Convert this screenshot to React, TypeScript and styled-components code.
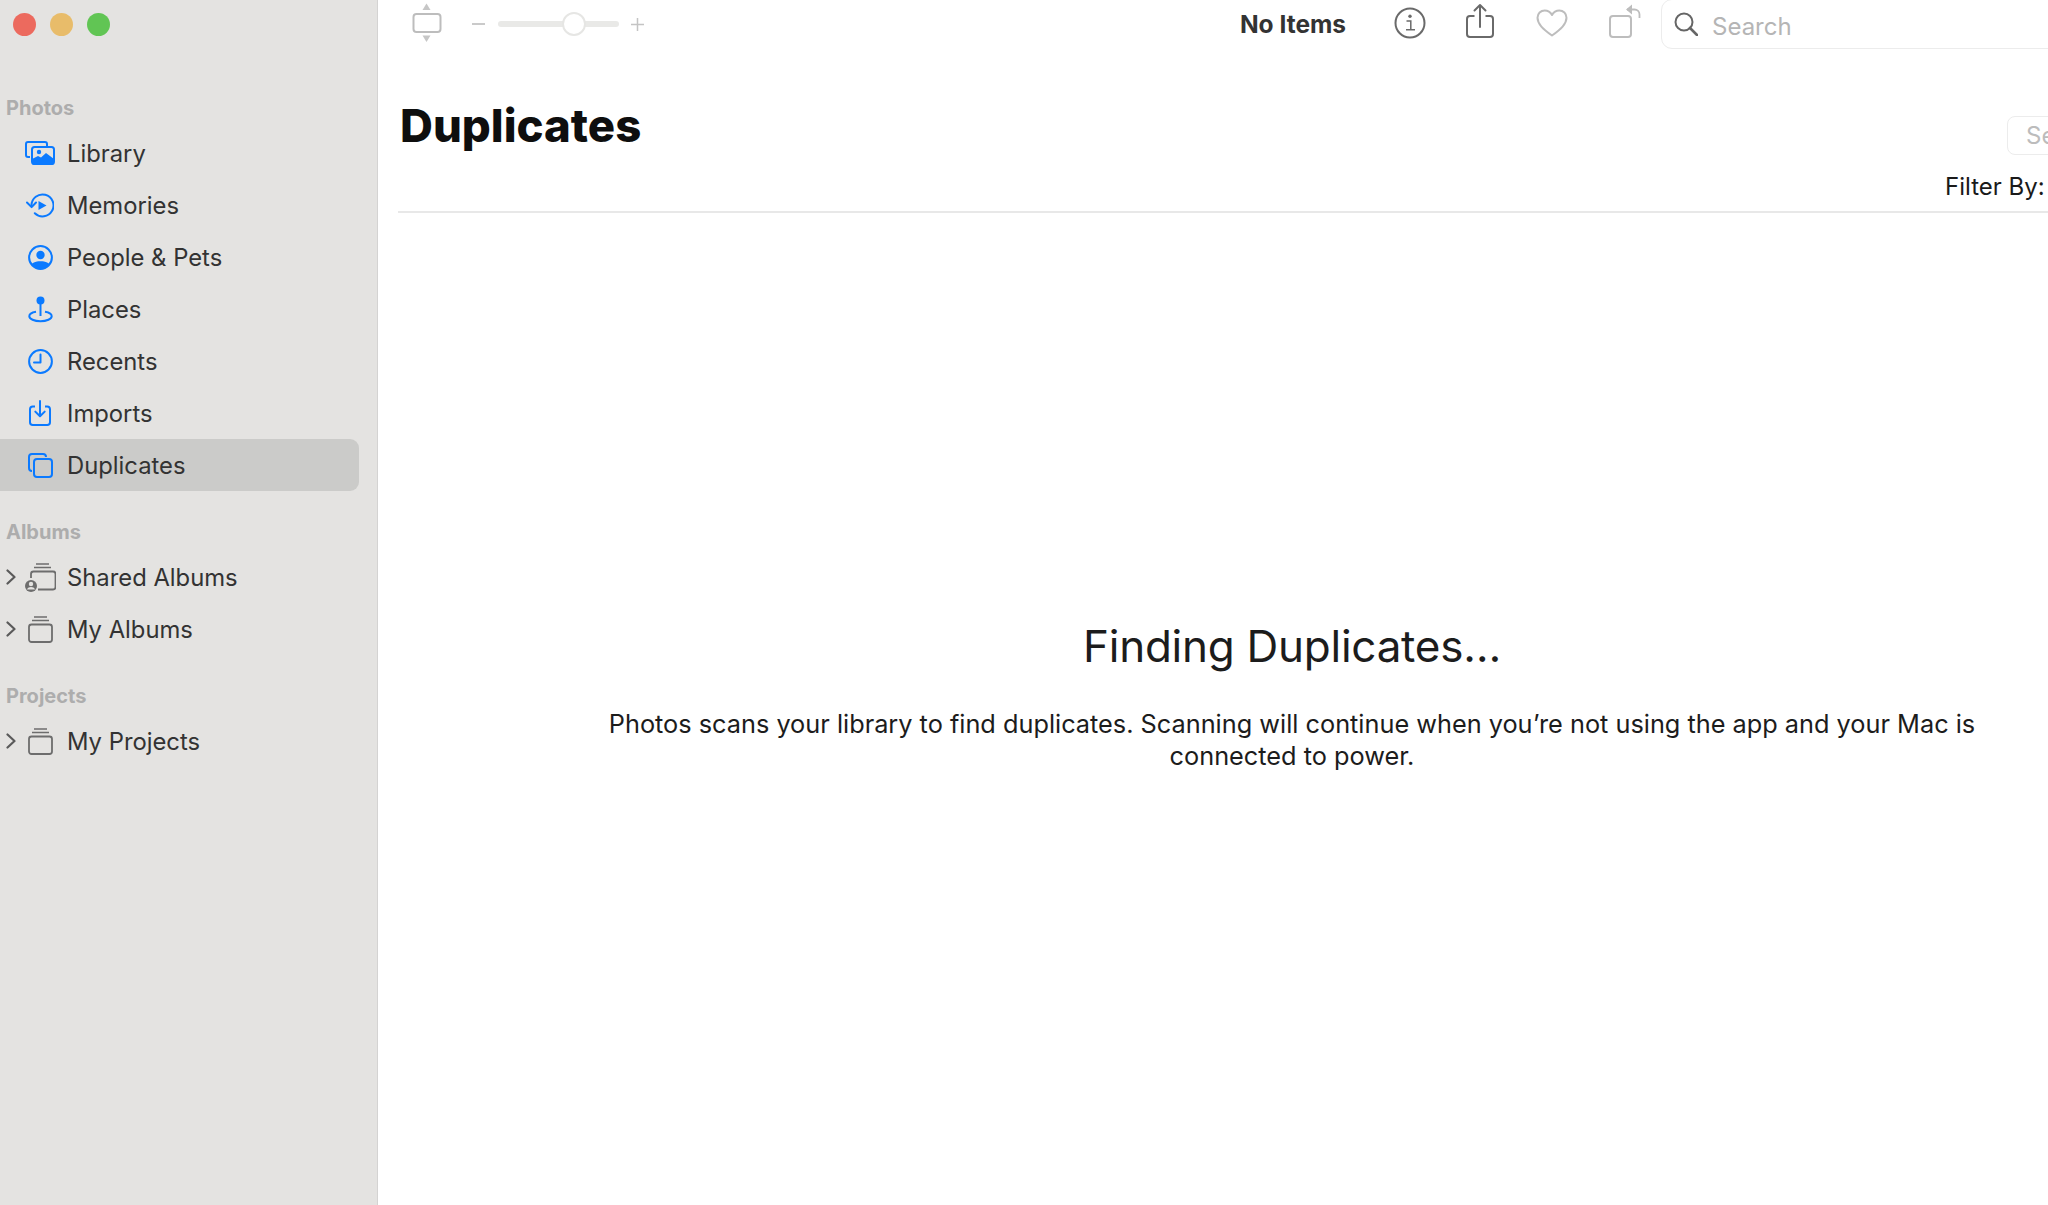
import React from "react";
import styled, { createGlobalStyle } from "styled-components";

const Global = createGlobalStyle`
  html, body { margin: 0; padding: 0; background: #fff; overflow: hidden; }
  body { font-family: Inter, "Liberation Sans", sans-serif; }
`;

const Window = styled.div`
  display: flex;
  width: 2048px;
  height: 1205px;
  overflow: hidden;
`;

const Sidebar = styled.aside`
  flex: 0 0 378px;
  box-sizing: border-box;
  background: #e4e3e1;
  border-right: 1px solid #d4d3d2;
  padding-right: 18px;
`;

const Lights = styled.div`
  display: flex;
  gap: 14px;
  padding: 13px 0 0 13px;
  height: 36px;
  box-sizing: content-box;
`;

const Light = styled.span<{ $color: string }>`
  width: 23px;
  height: 23px;
  border-radius: 50%;
  background: ${(p) => p.$color};
`;

const SectionLabel = styled.div<{ $top: number }>`
  margin-top: ${(p) => p.$top}px;
  margin-bottom: 6px;
  padding-left: 6px;
  height: 26px;
  line-height: 26px;
  font-size: 20px;
  font-weight: 700;
  color: #adadad;
`;

const Row = styled.div<{ $selected?: boolean }>`
  display: flex;
  align-items: center;
  height: 52px;
  border-radius: 0 9px 9px 0;
  background: ${(p) => (p.$selected ? "#cbcbc9" : "transparent")};
`;

const ChevronSlot = styled.span`
  flex: 0 0 24px;
  display: flex;
  align-items: center;
  padding-left: 6px;
  box-sizing: border-box;
`;

const IconSlot = styled.span`
  flex: 0 0 32px;
  height: 34px;
  display: flex;
  align-items: center;
  justify-content: center;
`;

const RowLabel = styled.span`
  margin-left: 11px;
  font-size: 23.8px;
  color: #333333;
`;

const Main = styled.main`
  flex: 1;
  min-width: 0;
  overflow: hidden;
`;

const Toolbar = styled.div`
  display: flex;
  align-items: center;
  height: 48px;
  padding-left: 34px;
  width: 2000px;
`;

const ToolSlot = styled.span<{ $left: number; $lift?: number }>`
  margin-left: ${(p) => p.$left}px;
  margin-bottom: ${(p) => p.$lift ?? 0}px;
  display: flex;
  align-items: center;
  flex-shrink: 0;
`;

const ZoomSlider = styled.div`
  position: relative;
  margin-left: 13px;
  width: 121px;
  height: 6px;
  border-radius: 3px;
  background: #e9e9e7;
  flex-shrink: 0;
`;

const SliderThumb = styled.span`
  position: absolute;
  left: 64px;
  top: -9px;
  width: 20px;
  height: 20px;
  border-radius: 50%;
  background: #fff;
  border: 2px solid #e6e6e4;
`;

const ItemCount = styled.span`
  margin-left: 594px;
  width: 110px;
  text-align: center;
  font-size: 24.5px;
  line-height: 50px;
  font-weight: 700;
  color: #333;
  flex-shrink: 0;
`;

const SearchField = styled.div`
  margin-left: 20px;
  flex: 0 0 440px;
  height: 50px;
  box-sizing: border-box;
  margin-top: -1px;
  display: flex;
  align-items: center;
  gap: 14px;
  padding-left: 12px;
  border: 1px solid #ececec;
  border-radius: 11px;
  font-size: 24px;
  color: #b5b5b5;
`;

const SearchText = styled.span`
  position: relative;
  top: 3px;
`;

const Header = styled.header`
  display: flex;
  width: 1800px;
  margin-left: 20px;
  height: 165px;
  box-sizing: border-box;
  border-bottom: 2px solid #e8e8e8;
`;

const TitleBlock = styled.div`
  flex: 0 0 1547px;
`;

const Title = styled.h1`
  margin: 50px 0 0 2px;
  font-size: 45.5px;
  line-height: 56px;
  font-weight: 800;
  color: #0e0e0e;
`;

const Actions = styled.div`
  display: flex;
  flex-direction: column;
  align-items: flex-start;
`;

const SelectButton = styled.div`
  margin: 68px 0 0 62px;
  width: 110px;
  height: 39px;
  box-sizing: border-box;
  border: 1px solid #ececec;
  border-radius: 8px;
  padding-left: 18px;
  line-height: 37px;
  font-size: 24px;
  color: #bcbcbc;
`;

const FilterLabel = styled.div`
  margin-top: 18px;
  font-size: 24px;
  line-height: 28px;
  color: #1a1a1a;
  white-space: nowrap;
`;

const EmptyState = styled.section`
  width: 1788px;
  margin-left: 20px;
  display: flex;
  flex-direction: column;
  align-items: center;
  padding-top: 405px;
`;

const EmptyTitle = styled.h2`
  margin: 0;
  font-size: 44px;
  letter-spacing: -0.26px;
  line-height: 56px;
  font-weight: 400;
  color: #1c1c1c;
`;

const EmptyBody = styled.p`
  margin: 34px 0 0;
  max-width: 1400px;
  font-size: 25.3px;
  line-height: 32px;
  text-align: center;
  color: #1c1c1c;
`;

const BLUE = "#0b7aff";
const GREY = "#6d6d6d";

const Chevron = () => (
  <svg width="11" height="16" viewBox="0 0 11 16" fill="none">
    <path d="M1.5 1.5 8.5 8l-7 6.5" stroke="#5a5a5a" strokeWidth="2.2" strokeLinecap="round" strokeLinejoin="round" />
  </svg>
);

const LibraryIcon = () => (
  <svg width="30" height="24" viewBox="0 0 30 24" fill="none">
    <path d="M5 16H3a2 2 0 0 1-2-2V3a2 2 0 0 1 2-2h17a2 2 0 0 1 2 2v2" stroke={BLUE} strokeWidth="2" />
    <rect x="7" y="6" width="22" height="17" rx="2.5" stroke={BLUE} strokeWidth="2" />
    <circle cx="14" cy="11" r="2.2" fill={BLUE} />
    <path d="M7 18l6-3 3 1.500 5-4.500 8 6v3.500a2.500 2.500 0 0 1-2.500 2.500h-17A2.500 2.500 0 0 1 7 21.500z" fill={BLUE} />
  </svg>
);

const MemoriesIcon = () => (
  <svg width="28" height="25" viewBox="0 0 28 25" fill="none">
    <path d="M5.500 12.500A11 11 0 1 1 8.800 20.300" stroke={BLUE} strokeWidth="2" strokeLinecap="round" />
    <path d="M1 9.500l4.600 4.600 4.400-4.600" stroke={BLUE} strokeWidth="2" strokeLinecap="round" strokeLinejoin="round" />
    <path d="M12.500 8v9l8-4.500z" fill={BLUE} />
  </svg>
);

const PeopleIcon = () => (
  <svg width="25" height="25" viewBox="0 0 25 25" fill="none">
    <defs>
      <clipPath id="peopleClip"><circle cx="12.500" cy="12.500" r="11.500" /></clipPath>
    </defs>
    <circle cx="12.500" cy="10" r="4.200" fill={BLUE} />
    <path d="M2 25v-4c1.500-3 5.400-4.700 10.500-4.700S21.500 18 23 21v4z" fill={BLUE} clipPath="url(#peopleClip)" />
    <circle cx="12.500" cy="12.500" r="11.400" stroke={BLUE} strokeWidth="2" />
  </svg>
);

const PlacesIcon = () => (
  <svg width="25" height="27" viewBox="0 0 25 27" fill="none">
    <circle cx="12.500" cy="4.500" r="4" fill={BLUE} />
    <path d="M12.500 7v13" stroke={BLUE} strokeWidth="2" />
    <path d="M8 15.800C4 16.500 1.300 18 1.300 20.300c0 2.700 5 4.900 11.200 4.900s11.200-2.200 11.200-4.900c0-2.300-2.700-3.800-6.700-4.500" stroke={BLUE} strokeWidth="2" />
  </svg>
);

const RecentsIcon = () => (
  <svg width="25" height="25" viewBox="0 0 25 25" fill="none">
    <circle cx="12.500" cy="12.500" r="11.400" stroke={BLUE} strokeWidth="2" />
    <path d="M12.500 5.500V13.500H6" stroke={BLUE} strokeWidth="2" strokeLinecap="round" strokeLinejoin="round" />
  </svg>
);

const ImportsIcon = () => (
  <svg width="22" height="26" viewBox="0 0 22 26" fill="none">
    <path d="M6 6.500H3.800a2.800 2.800 0 0 0-2.800 2.800v12.900a2.800 2.800 0 0 0 2.800 2.800h14.400a2.800 2.800 0 0 0 2.800-2.800V9.300a2.800 2.800 0 0 0-2.800-2.800H16" stroke={BLUE} strokeWidth="2" />
    <path d="M11 1v15M6.300 11.600l4.700 4.700 4.700-4.700" stroke={BLUE} strokeWidth="2" strokeLinecap="round" strokeLinejoin="round" />
  </svg>
);

const DuplicatesIcon = () => (
  <svg width="25" height="25" viewBox="0 0 25 25" fill="none">
    <path d="M4 18A3 3 0 0 1 1 15V4a3 3 0 0 1 3-3h11a3 3 0 0 1 3 3" stroke={BLUE} strokeWidth="2" />
    <rect x="6" y="6" width="18" height="18" rx="3" stroke={BLUE} strokeWidth="2" />
  </svg>
);

const StackIcon = () => (
  <svg width="25" height="27" viewBox="0 0 25 27" fill="none">
    <path d="M6 1h13M4 4.500h17" stroke={GREY} strokeWidth="1.500" />
    <rect x="1" y="8.500" width="23" height="17.500" rx="2.500" stroke={GREY} strokeWidth="1.800" />
  </svg>
);

const SharedStackIcon = () => (
  <svg width="31" height="29" viewBox="0 0 31 29" fill="none">
    <path d="M11 1h13M9 4.500h17" stroke={GREY} strokeWidth="1.500" />
    <path d="M6 15v-4a2.500 2.500 0 0 1 2.500-2.500h19.500a2.500 2.500 0 0 1 2.500 2.500v13a2.500 2.500 0 0 1-2.500 2.500H13" stroke={GREY} strokeWidth="1.800" />
    <circle cx="6" cy="23" r="6" fill={GREY} />
    <circle cx="6" cy="21" r="2.200" fill="#e4e3e1" />
    <path d="M2 26.500c.8-1.800 2.200-2.500 4-2.500s3.200.7 4 2.500z" fill="#e4e3e1" />
  </svg>
);

const ViewToggleIcon = () => (
  <svg width="30" height="48" viewBox="0 0 30 48" fill="none">
    <path d="M14.500 3.500l4 6.500h-8z" fill="#c6c6c6" />
    <rect x="1.500" y="14" width="27" height="18" rx="3" stroke="#bdbdbd" strokeWidth="2" />
    <path d="M14.500 42l4-6.500h-8z" fill="#c6c6c6" />
  </svg>
);

const MinusIcon = () => (
  <svg width="13" height="4" viewBox="0 0 13 4"><path d="M0 2h13" stroke="#c4c4c4" strokeWidth="1.800" /></svg>
);

const PlusIcon = () => (
  <svg width="13" height="13" viewBox="0 0 13 13"><path d="M0 6.500h13M6.500 0v13" stroke="#c4c4c4" strokeWidth="1.500" /></svg>
);

const InfoIcon = () => (
  <svg width="32" height="32" viewBox="0 0 32 32" fill="none">
    <circle cx="16" cy="16" r="14.500" stroke="#6a6a6a" strokeWidth="2" />
    <circle cx="16" cy="9.300" r="1.700" fill="#6a6a6a" />
    <path d="M12.500 14h4.300v8.500M12 22.800h9" stroke="#6a6a6a" strokeWidth="1.500" />
  </svg>
);

const ShareIcon = () => (
  <svg width="28" height="36" viewBox="0 0 28 36" fill="none">
    <path d="M8.500 13H4a3 3 0 0 0-3 3v15a3 3 0 0 0 3 3h20a3 3 0 0 0 3-3V16a3 3 0 0 0-3-3h-4.500" stroke="#6a6a6a" strokeWidth="2" />
    <path d="M14 24V2M8.500 7.500 14 2l5.500 5.500" stroke="#6a6a6a" strokeWidth="2" strokeLinecap="round" strokeLinejoin="round" />
  </svg>
);

const HeartIcon = () => (
  <svg width="32" height="28" viewBox="0 0 32 28" fill="none">
    <path d="M16 26.500C7 20 1.500 15 1.500 8.800 1.500 4.600 4.700 1.500 8.700 1.500c3 0 5.700 1.600 7.300 4.500 1.600-2.900 4.300-4.500 7.300-4.500 4 0 7.200 3.100 7.200 7.300C30.500 15 25 20 16 26.500z" stroke="#bdbdbd" strokeWidth="2" strokeLinejoin="round" />
  </svg>
);

const RotateIcon = () => (
  <svg width="32" height="34" viewBox="0 0 32 34" fill="none">
    <rect x="1" y="12" width="21" height="21" rx="3" stroke="#bdbdbd" strokeWidth="2" />
    <path d="M30.500 14v-3.500a5 5 0 0 0-5-5H18" stroke="#bdbdbd" strokeWidth="1.800" />
    <path d="M23 .5l-6 5 6 5z" fill="#bdbdbd" />
  </svg>
);

const SearchIcon = () => (
  <svg width="24" height="24" viewBox="0 0 24 24" fill="none">
    <circle cx="10" cy="10" r="8.500" stroke="#666" strokeWidth="2" />
    <path d="M16 16l7 7" stroke="#666" strokeWidth="2.600" strokeLinecap="round" />
  </svg>
);

type Item = { label: string; icon: React.ReactNode; selected?: boolean; chevron?: boolean };

const photos: Item[] = [
  { label: "Library", icon: <LibraryIcon /> },
  { label: "Memories", icon: <MemoriesIcon /> },
  { label: "People & Pets", icon: <PeopleIcon /> },
  { label: "Places", icon: <PlacesIcon /> },
  { label: "Recents", icon: <RecentsIcon /> },
  { label: "Imports", icon: <ImportsIcon /> },
  { label: "Duplicates", icon: <DuplicatesIcon />, selected: true },
];
const albums: Item[] = [
  { label: "Shared Albums", icon: <SharedStackIcon />, chevron: true },
  { label: "My Albums", icon: <StackIcon />, chevron: true },
];
const projects: Item[] = [{ label: "My Projects", icon: <StackIcon />, chevron: true }];

const Rows = ({ items }: { items: Item[] }) => (
  <>
    {items.map((it) => (
      <Row key={it.label} $selected={it.selected}>
        <ChevronSlot>{it.chevron && <Chevron />}</ChevronSlot>
        <IconSlot>{it.icon}</IconSlot>
        <RowLabel>{it.label}</RowLabel>
      </Row>
    ))}
  </>
);

export default function App() {
  return (
    <Window>
      <Global />
      <Sidebar>
        <Lights>
          <Light $color="#ec6a5e" />
          <Light $color="#e8bc6a" />
          <Light $color="#61c554" />
        </Lights>
        <SectionLabel $top={46}>Photos</SectionLabel>
        <Rows items={photos} />
        <SectionLabel $top={28}>Albums</SectionLabel>
        <Rows items={albums} />
        <SectionLabel $top={28}>Projects</SectionLabel>
        <Rows items={projects} />
      </Sidebar>
      <Main>
        <Toolbar>
          <ToolSlot $left={0}><ViewToggleIcon /></ToolSlot>
          <ToolSlot $left={30}><MinusIcon /></ToolSlot>
          <ZoomSlider><SliderThumb /></ZoomSlider>
          <ToolSlot $left={12}><PlusIcon /></ToolSlot>
          <ItemCount>No Items</ItemCount>
          <ToolSlot $left={46} $lift={2}><InfoIcon /></ToolSlot>
          <ToolSlot $left={40} $lift={6}><ShareIcon /></ToolSlot>
          <ToolSlot $left={42} $lift={3}><HeartIcon /></ToolSlot>
          <ToolSlot $left={41} $lift={7}><RotateIcon /></ToolSlot>
          <SearchField>
            <SearchIcon />
            <SearchText>Search</SearchText>
          </SearchField>
        </Toolbar>
        <Header>
          <TitleBlock>
            <Title>Duplicates</Title>
          </TitleBlock>
          <Actions>
            <SelectButton>Select</SelectButton>
            <FilterLabel>Filter By:</FilterLabel>
          </Actions>
        </Header>
        <EmptyState>
          <EmptyTitle>Finding Duplicates…</EmptyTitle>
          <EmptyBody>
            Photos scans your library to find duplicates. Scanning will continue when you’re not using the app and your Mac is connected to power.
          </EmptyBody>
        </EmptyState>
      </Main>
    </Window>
  );
}
